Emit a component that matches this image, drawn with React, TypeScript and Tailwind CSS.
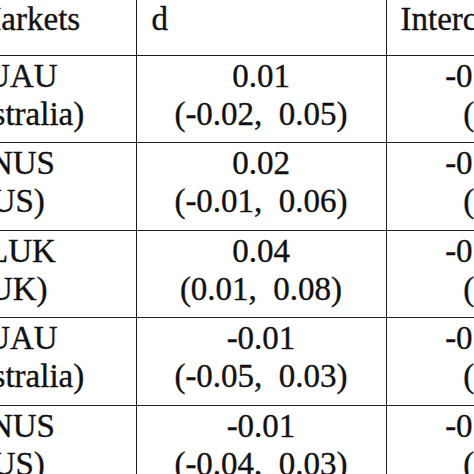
type Row = {
  market: string;
  country: string;
  d: string;
  dCi: string;
  intercept: string;
  interceptCi: string;
};

const rows: Row[] = [
  { market: "SUAU", country: "(Australia)", d: "0.01", dCi: "(-0.02,  0.05)", intercept: "-0.01***", interceptCi: "(0.003)" },
  { market: "SNUS", country: "(US)", d: "0.02", dCi: "(-0.01,  0.06)", intercept: "-0.02***", interceptCi: "(0.004)" },
  { market: "SLUK", country: "(UK)", d: "0.04", dCi: "(0.01,  0.08)", intercept: "-0.01***", interceptCi: "(0.003)" },
  { market: "SUAU", country: "(Australia)", d: "-0.01", dCi: "(-0.05,  0.03)", intercept: "-0.02***", interceptCi: "(0.005)" },
  { market: "SNUS", country: "(US)", d: "-0.01", dCi: "(-0.04,  0.03)", intercept: "-0.01***", interceptCi: "(0.004)" },
];

export default function App() {
  return (
    <div className="h-[474px] w-[474px] overflow-hidden bg-white text-[#111]">
      <table className="-ml-[110px] w-[746px] min-w-[746px] table-fixed border-collapse font-['Liberation_Serif','Times_New_Roman',serif] text-[33px] leading-[38.4px] [-webkit-text-stroke:0.35px_#111]">
        <colgroup>
          <col className="w-[246px]" />
          <col className="w-[250px]" />
          <col className="w-[250px]" />
        </colgroup>
        <thead>
          <tr className="h-[55px] border-b-[1.5px] border-[#1f1f1f]">
            <th className="border-r-[1.5px] border-[#1f1f1f] pl-[82px] text-left align-top font-normal">Markets</th>
            <th className="border-r-[1.5px] border-[#1f1f1f] pl-[15px] text-left align-top font-normal">d</th>
            <th className="pl-[14px] text-left align-top font-normal">Intercept</th>
          </tr>
        </thead>
        <tbody>
          {rows.map((row, i) => (
            <tr key={i} className="h-[87.5px] border-b-[1.5px] border-[#1f1f1f]">
              <td className="border-r-[1.5px] border-[#1f1f1f] pt-[1px] text-center align-top">
                <div>{row.market}</div>
                <div>{row.country}</div>
              </td>
              <td className="border-r-[1.5px] border-[#1f1f1f] pt-[1px] text-center align-top">
                <div>{row.d}</div>
                <div className="whitespace-pre">{row.dCi}</div>
              </td>
              <td className="pt-[1px] text-center align-top">
                <div className="mr-[14px]">{row.intercept}</div>
                <div>{row.interceptCi}</div>
              </td>
            </tr>
          ))}
        </tbody>
      </table>
    </div>
  );
}
